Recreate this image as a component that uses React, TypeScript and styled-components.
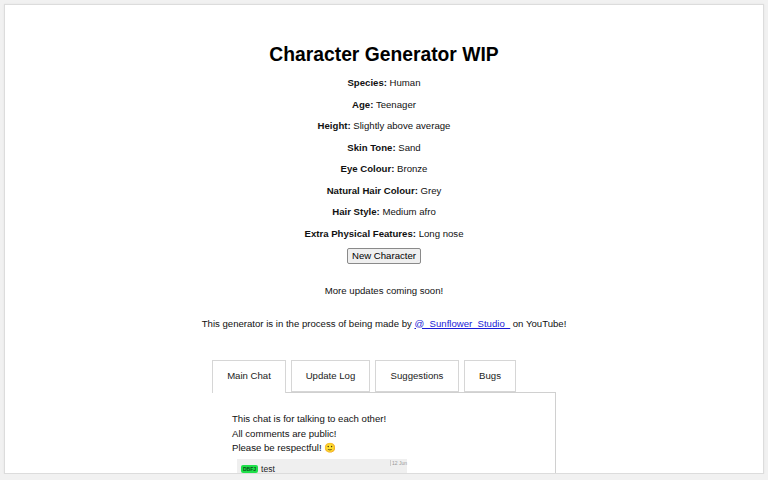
import React from "react";
import styled, { createGlobalStyle } from "styled-components";

const Global = createGlobalStyle`
  html, body { margin: 0; padding: 0; background: #f1f1f1; }
  body { font-family: "Liberation Sans", Arial, sans-serif; color: #111; }
`;

const Frame = styled.div`
  margin: 4px 4px 0 4px;
  height: 470px;
  box-sizing: border-box;
  background: #fff;
  border: 1px solid #dcdcdc;
  box-shadow: 0 0 2px rgba(0, 0, 0, 0.06);
  overflow: hidden;
  display: flex;
  flex-direction: column;
  align-items: center;
  padding-top: 38px;
`;

const Title = styled.h1`
  margin: 0 0 10px 0;
  font-size: 19.3px;
  line-height: 23px;
  font-weight: bold;
  color: #000;
`;

const Trait = styled.p`
  margin: 0 0 8.5px 0;
  font-size: 9.6px;
  line-height: 13px;
  color: #111;
  b { font-weight: bold; }
`;

const Button = styled.button`
  margin-top: 0;
  font-family: "Liberation Sans", Arial, sans-serif;
  font-size: 9.6px;
  line-height: 12px;
  padding: 1px 4px;
  background: #efefef;
  border: 1px solid #8a8a8a;
  border-radius: 2px;
  color: #000;
  height: 16px;
`;

const Note = styled.p<{ $top: number }>`
  margin: ${(p) => p.$top}px 0 0 0;
  font-size: 9.6px;
  line-height: 13px;
  color: #111;
`;

const Link = styled.a`
  color: #1a1ad6;
  text-decoration: underline;
`;

const Tabs = styled.div`
  margin-top: 30.5px;
  width: 344px;
  display: flex;
  flex-direction: column;
`;

const TabRow = styled.div`
  display: flex;
  gap: 5px;
  height: 32px;
`;

const Tab = styled.div<{ $active?: boolean; $w: number }>`
  box-sizing: border-box;
  width: ${(p) => p.$w}px;
  height: ${(p) => (p.$active ? "33px" : "32px")};
  padding-bottom: ${(p) => (p.$active ? "3px" : "2px")};
  display: flex;
  align-items: center;
  justify-content: center;
  font-size: 9.6px;
  color: #222;
  border: 1px solid #d6d6d6;
  border-bottom: ${(p) => (p.$active ? "none" : "1px solid #d6d6d6")};
  background: #fff;
  position: relative;
  z-index: ${(p) => (p.$active ? 1 : 0)};
`;

const Panel = styled.div`
  box-sizing: border-box;
  border: 1px solid #d0d0d0;
  border-left-color: #fff;
  height: 120px;
  padding: 19px 0 0 19px;
`;

const Line = styled.div`
  font-size: 9.6px;
  line-height: 14.5px;
  color: #111;
`;

const MsgWrap = styled.div`
  display: flex;
  flex-direction: column;
`;

const Message = styled.div`
  margin: 3px 0 0 5px;
  width: 170px;
  height: 30px;
  background: #efefef;
  position: relative;
  padding: 5px 0 0 4px;
  box-sizing: border-box;
  display: flex;
  align-items: flex-start;
  gap: 3px;
  align-self: flex-start;
`;

const Badge = styled.span`
  margin-top: 1px;
  background: #1fe04a;
  color: #0a4a18;
  font-size: 5px;
  font-weight: bold;
  padding: 1px 2px;
  border-radius: 2px;
  line-height: 6px;
`;

const MsgText = styled.span`
  font-size: 8.5px;
  color: #222;
  line-height: 10px;
`;

const Stamp = styled.span`
  position: absolute;
  top: 1px;
  right: 0;
  font-size: 5px;
  color: #999;
  border-left: 1px solid #ccc;
  padding-left: 1px;
`;

const traits: [string, string][] = [
  ["Species", "Human"],
  ["Age", "Teenager"],
  ["Height", "Slightly above average"],
  ["Skin Tone", "Sand"],
  ["Eye Colour", "Bronze"],
  ["Natural Hair Colour", "Grey"],
  ["Hair Style", "Medium afro"],
  ["Extra Physical Features", "Long nose"],
];

const tabs: [string, number][] = [
  ["Main Chat", 74],
  ["Update Log", 79],
  ["Suggestions", 84],
  ["Bugs", 52],
];

export default function App() {
  return (
    <>
      <Global />
      <Frame>
        <Title>Character Generator WIP</Title>
        {traits.map(([k, v]) => (
          <Trait key={k}>
            <b>{k}:</b> {v}
          </Trait>
        ))}
        <Button>New Character</Button>
        <Note $top={19.5}>More updates coming soon!</Note>
        <Note $top={20}>
          This generator is in the process of being made by{" "}
          <Link href="#">@_Sunflower_Studio_</Link> on YouTube!
        </Note>
        <Tabs>
          <TabRow>
            {tabs.map(([t, w], i) => (
              <Tab key={t} $w={w} $active={i === 0}>
                {t}
              </Tab>
            ))}
          </TabRow>
          <Panel>
            <Line>This chat is for talking to each other!</Line>
            <Line>All comments are public!</Line>
            <Line>Please be respectful! 🙂</Line>
            <MsgWrap>
              <Message>
                <Badge>DBFJ</Badge>
                <MsgText>test</MsgText>
                <Stamp>12 Jun</Stamp>
              </Message>
            </MsgWrap>
          </Panel>
        </Tabs>
      </Frame>
    </>
  );
}
